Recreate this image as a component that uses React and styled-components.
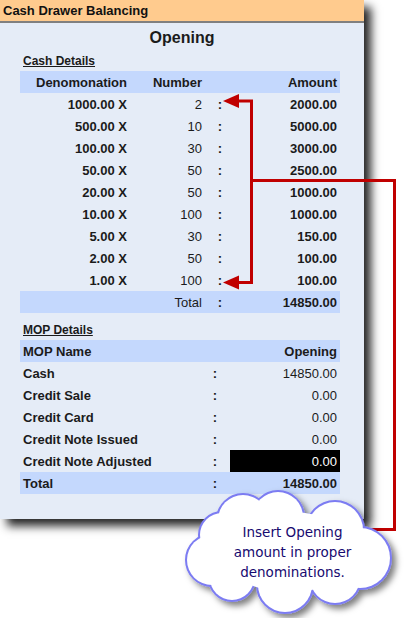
import React from "react";
import styled, { createGlobalStyle } from "styled-components";

const GlobalStyle = createGlobalStyle`
  html, body {
    margin: 0;
    padding: 0;
    background: #ffffff;
  }
  body {
    font-family: "Liberation Sans", Arial, sans-serif;
    color: #1b1b1b;
  }
`;

const Stage = styled.div`
  position: relative;
  width: 413px;
  height: 618px;
  overflow: hidden;
  background: #ffffff;
`;

const Panel = styled.div`
  width: 364px;
  height: 519px;
  background: #e5ecf7;
  box-shadow: 7px 7px 9px rgba(0, 0, 0, 0.85);
`;

const TitleBar = styled.div`
  height: 21px;
  line-height: 21px;
  padding-left: 3px;
  background: #ffcb8e;
  border-bottom: 2px solid #808080;
  font-size: 13px;
  font-weight: bold;
  color: #111;
`;

const Heading = styled.div`
  margin-top: 2px;
  height: 26px;
  line-height: 26px;
  text-align: center;
  font-size: 16px;
  font-weight: bold;
`;

const SectionLabel = styled.div`
  margin-top: ${(p) => p.$top || 0}px;
  height: 20px;
  line-height: 20px;
  padding-left: 23px;
  font-size: 12px;
  font-weight: bold;
  text-decoration: underline;
`;

const Table = styled.div`
  margin-left: 20px;
  width: 320px;
`;

const CashRow = styled.div`
  display: grid;
  grid-template-columns: 107px 75px 36px 1fr;
  height: 22px;
  align-items: center;
  background: ${(p) => (p.$shade ? "#c4d8fd" : "transparent")};
  font-size: 13px;
`;

const MopRow = styled.div`
  display: grid;
  grid-template-columns: 190px 10px 10px 1fr;
  height: 22px;
  align-items: stretch;
  background: ${(p) => (p.$shade ? "#c4d8fd" : "transparent")};
  font-size: 13px;
`;

const Cell = styled.div`
  display: flex;
  align-items: center;
  justify-content: ${(p) =>
    p.$align === "right" ? "flex-end" : p.$align === "center" ? "center" : "flex-start"};
  padding: 0 ${(p) => p.$padR || 0}px 0 ${(p) => p.$padL || 0}px;
  font-weight: ${(p) => (p.$bold ? "bold" : "normal")};
  white-space: nowrap;
`;

const Field = styled(Cell)`
  background: ${(p) => (p.$active ? "#000000" : "transparent")};
  color: ${(p) => (p.$active ? "#ffffff" : "inherit")};
`;

const Overlay = styled.svg`
  position: absolute;
  left: 0;
  top: 0;
  pointer-events: none;
`;

const Callout = styled.div`
  position: absolute;
  left: 180px;
  top: 485px;
  width: 225px;
  height: 133px;
  display: flex;
  align-items: center;
  justify-content: center;
`;

const CloudShape = styled.svg`
  position: absolute;
  left: 0;
  top: 0;
  overflow: visible;
`;

const CalloutText = styled.div`
  position: relative;
  width: 160px;
  text-align: center;
  font-family: "Comic Sans MS", "DejaVu Sans", sans-serif;
  font-size: 13.5px;
  line-height: 20px;
  color: #170a70;
`;

const cash = [
  ["1000.00", "2", "2000.00"],
  ["500.00", "10", "5000.00"],
  ["100.00", "30", "3000.00"],
  ["50.00", "50", "2500.00"],
  ["20.00", "50", "1000.00"],
  ["10.00", "100", "1000.00"],
  ["5.00", "30", "150.00"],
  ["2.00", "50", "100.00"],
  ["1.00", "100", "100.00"],
];

const mop = [
  ["Cash", "14850.00"],
  ["Credit Sale", "0.00"],
  ["Credit Card", "0.00"],
  ["Credit Note Issued", "0.00"],
  ["Credit Note Adjusted", "0.00", true],
];

const lobes = [
  [63, 35, 25],
  [98, 32, 25],
  [155, 45, 28],
  [180, 73, 30],
  [155, 93, 25],
  [105, 100, 27],
  [52, 93, 22],
  [32, 75, 25],
  [42, 50, 22],
];

function Cloud() {
  return (
    <CloudShape width="225" height="133" viewBox="0 0 225 133">
      <defs>
        <filter id="cloudShadow" x="-20%" y="-20%" width="150%" height="150%">
          <feDropShadow dx="4" dy="4" stdDeviation="3" floodColor="#000" floodOpacity="0.5" />
        </filter>
      </defs>
      <g filter="url(#cloudShadow)">
        {lobes.map(([cx, cy, r], i) => (
          <circle key={i} cx={cx} cy={cy} r={r} fill="#7c7cf2" stroke="#7c7cf2" strokeWidth="4" />
        ))}
        <ellipse cx="110" cy="67" rx="70" ry="40" fill="#7c7cf2" />
      </g>
      <g fill="#ffffff">
        {lobes.map(([cx, cy, r], i) => (
          <circle key={i} cx={cx} cy={cy} r={r} />
        ))}
        <ellipse cx="110" cy="67" rx="70" ry="40" />
      </g>
    </CloudShape>
  );
}

function Arrows() {
  const red = "#c00000";
  return (
    <Overlay width="413" height="618" viewBox="0 0 413 618">
      <polyline
        points="237,101 251.5,101 251.5,282.5 237,282.5"
        fill="none"
        stroke={red}
        strokeWidth="3"
      />
      <polygon points="223,101 239,94 239,108" fill={red} />
      <polygon points="223,282.5 239,275.5 239,289.5" fill={red} />
      <polyline
        points="251.5,180.5 394.5,180.5 394.5,529.5 370,529.5"
        fill="none"
        stroke={red}
        strokeWidth="3"
      />
    </Overlay>
  );
}

export default function App() {
  return (
    <Stage>
      <GlobalStyle />
      <Panel>
        <TitleBar>Cash Drawer Balancing</TitleBar>
        <Heading>Opening</Heading>
        <SectionLabel>Cash Details </SectionLabel>
        <Table>
          <CashRow $shade>
            <Cell $align="right" $bold>Denomonation</Cell>
            <Cell $align="right" $bold>Number</Cell>
            <Cell />
            <Cell $align="right" $padR={3} $bold>Amount</Cell>
          </CashRow>
          {cash.map(([d, n, a]) => (
            <CashRow key={d}>
              <Cell $align="right" $bold>{d} X</Cell>
              <Cell $align="right">{n}</Cell>
              <Cell $align="center" $bold>:</Cell>
              <Cell $align="right" $padR={3} $bold>{a}</Cell>
            </CashRow>
          ))}
          <CashRow $shade>
            <Cell />
            <Cell $align="right">Total</Cell>
            <Cell $align="center" $bold>:</Cell>
            <Cell $align="right" $padR={3} $bold>14850.00</Cell>
          </CashRow>
        </Table>
        <SectionLabel $top={7}>MOP Details</SectionLabel>
        <Table>
          <MopRow $shade>
            <Cell $padL={3} $bold>MOP Name</Cell>
            <Cell />
            <Cell />
            <Cell $align="right" $padR={3} $bold>Opening</Cell>
          </MopRow>
          {mop.map(([name, val, active]) => (
            <MopRow key={name}>
              <Cell $padL={3} $bold>{name}</Cell>
              <Cell $align="center" $bold>:</Cell>
              <Cell />
              <Field $align="right" $padR={3} $active={active}>{val}</Field>
            </MopRow>
          ))}
          <MopRow $shade>
            <Cell $padL={3} $bold>Total</Cell>
            <Cell $align="center" $bold>:</Cell>
            <Cell />
            <Cell $align="right" $padR={3} $bold>14850.00</Cell>
          </MopRow>
        </Table>
      </Panel>
      <Arrows />
      <Callout>
        <Cloud />
        <CalloutText>
          Insert Opening
          <br />
          amount in proper
          <br />
          denominations.
        </CalloutText>
      </Callout>
    </Stage>
  );
}
